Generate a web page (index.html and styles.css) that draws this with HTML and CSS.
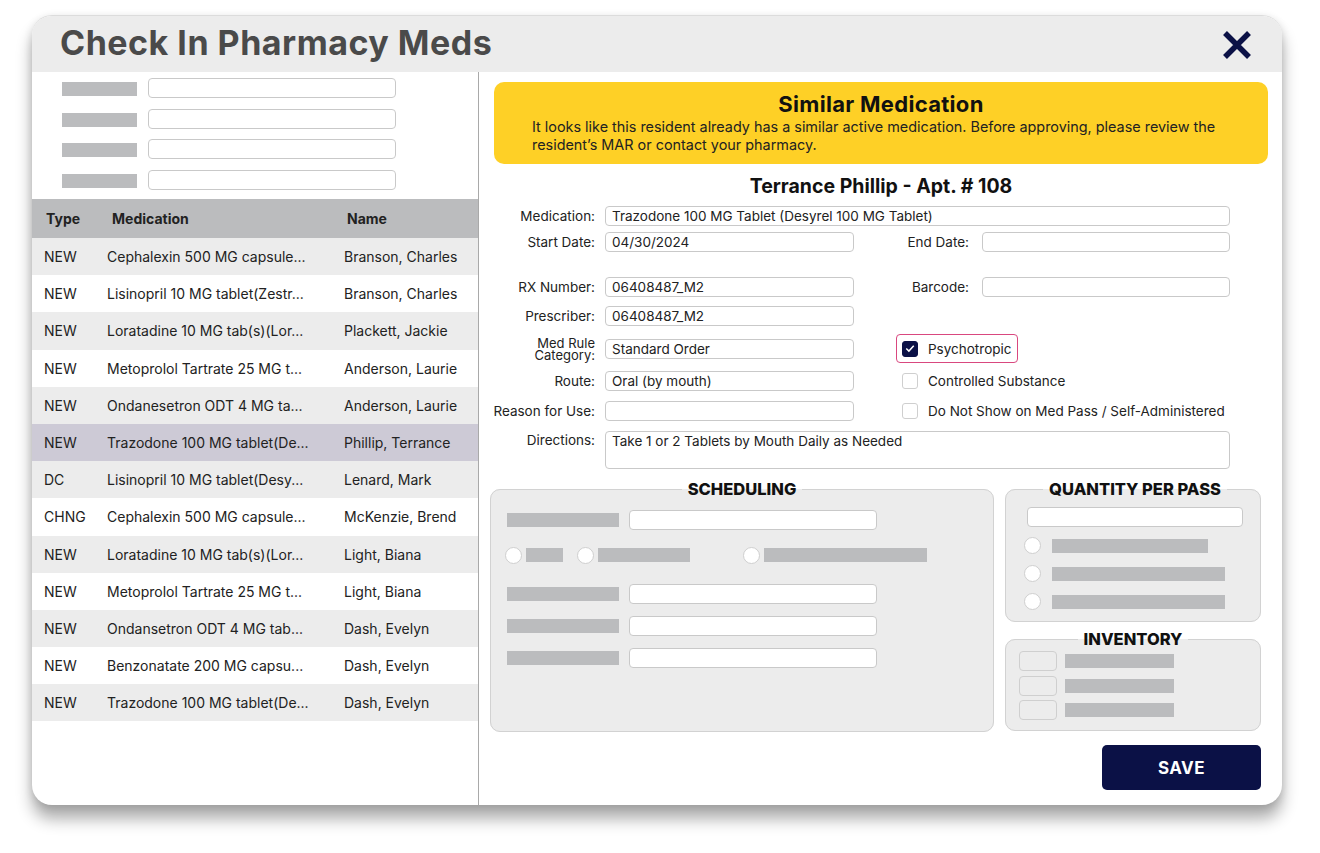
FILE: index.html
```html
<!DOCTYPE html>
<html>
<head>
<meta charset="utf-8">
<link rel="stylesheet" href="styles.css">
</head>
<body>
<div class="modal">
  <div class="header">
    <h1 class="title">Check In Pharmacy Meds</h1>
    <svg class="close" width="30" height="28" viewBox="0 0 30 28"><path d="M3 2 L27 26 M27 2 L3 26" stroke="#0b1146" stroke-width="5.5" stroke-linecap="butt"/></svg>
  </div>
  <div class="content">
    <div class="left">
      <div class="filters">
        <div class="frow"><span class="bar fbar"></span><span class="inp finp"></span></div>
        <div class="frow"><span class="bar fbar"></span><span class="inp finp"></span></div>
        <div class="frow"><span class="bar fbar"></span><span class="inp finp"></span></div>
        <div class="frow"><span class="bar fbar"></span><span class="inp finp"></span></div>
      </div>
      <div class="table">
        <div class="trow thead"><span class="c1">Type</span><span class="c2">Medication</span><span class="c3">Name</span></div>
        <div class="trow alt"><span class="c1">NEW</span><span class="c2">Cephalexin 500 MG capsule...</span><span class="c3">Branson, Charles</span></div>
        <div class="trow"><span class="c1">NEW</span><span class="c2">Lisinopril 10 MG tablet(Zestr...</span><span class="c3">Branson, Charles</span></div>
        <div class="trow alt"><span class="c1">NEW</span><span class="c2">Loratadine 10 MG tab(s)(Lor...</span><span class="c3">Plackett, Jackie</span></div>
        <div class="trow"><span class="c1">NEW</span><span class="c2">Metoprolol Tartrate 25 MG t...</span><span class="c3">Anderson, Laurie</span></div>
        <div class="trow alt"><span class="c1">NEW</span><span class="c2">Ondanesetron ODT 4 MG ta...</span><span class="c3">Anderson, Laurie</span></div>
        <div class="trow sel"><span class="c1">NEW</span><span class="c2">Trazodone 100 MG tablet(De...</span><span class="c3">Phillip, Terrance</span></div>
        <div class="trow alt"><span class="c1">DC</span><span class="c2">Lisinopril 10 MG tablet(Desy...</span><span class="c3">Lenard, Mark</span></div>
        <div class="trow"><span class="c1">CHNG</span><span class="c2">Cephalexin 500 MG capsule...</span><span class="c3">McKenzie, Brend</span></div>
        <div class="trow alt"><span class="c1">NEW</span><span class="c2">Loratadine 10 MG tab(s)(Lor...</span><span class="c3">Light, Biana</span></div>
        <div class="trow"><span class="c1">NEW</span><span class="c2">Metoprolol Tartrate 25 MG t...</span><span class="c3">Light, Biana</span></div>
        <div class="trow alt"><span class="c1">NEW</span><span class="c2">Ondansetron ODT 4 MG tab...</span><span class="c3">Dash, Evelyn</span></div>
        <div class="trow"><span class="c1">NEW</span><span class="c2">Benzonatate 200 MG capsu...</span><span class="c3">Dash, Evelyn</span></div>
        <div class="trow alt"><span class="c1">NEW</span><span class="c2">Trazodone 100 MG tablet(De...</span><span class="c3">Dash, Evelyn</span></div>
      </div>
    </div>
    <div class="right">
      <div class="banner">
        <div class="banner-title">Similar Medication</div>
        <p class="banner-text">It looks like this resident already has a similar active medication. Before approving, please review the resident’s MAR or contact your pharmacy.</p>
      </div>
      <h2 class="resident">Terrance Phillip - Apt. # 108</h2>
      <div class="form">
        <div class="r r-med">
          <label class="lbl">Medication:</label>
          <div class="field span3">Trazodone 100 MG Tablet (Desyrel 100 MG Tablet)</div>
        </div>
        <div class="r r-start">
          <label class="lbl">Start Date:</label>
          <div class="field">04/30/2024</div>
          <label class="lbl lbl2">End Date:</label>
          <div class="field"></div>
        </div>
        <div class="r r-rx">
          <label class="lbl">RX Number:</label>
          <div class="field">06408487_M2</div>
          <label class="lbl lbl2">Barcode:</label>
          <div class="field"></div>
        </div>
        <div class="r r-pres">
          <label class="lbl">Prescriber:</label>
          <div class="field">06408487_M2</div>
        </div>
        <div class="r r-rule">
          <label class="lbl two"><span class="ln">Med Rule</span><span class="ln">Category:</span></label>
          <div class="field">Standard Order</div>
          <div class="checkcell">
            <div class="check-hl"><span class="cb checked"><svg width="15" height="15" viewBox="0 0 15 15"><path d="M3.5 7.5 L6.3 10.3 L11.5 4.5" fill="none" stroke="#fff" stroke-width="1.6"/></svg></span><span>Psychotropic</span></div>
          </div>
        </div>
        <div class="r r-route">
          <label class="lbl">Route:</label>
          <div class="field">Oral (by mouth)</div>
          <div class="checkcell"><div class="check"><span class="cb"></span><span>Controlled Substance</span></div></div>
        </div>
        <div class="r r-reason">
          <label class="lbl">Reason for Use:</label>
          <div class="field"></div>
          <div class="checkcell"><div class="check"><span class="cb"></span><span>Do Not Show on Med Pass / Self-Administered</span></div></div>
        </div>
        <div class="r r-dir">
          <label class="lbl">Directions:</label>
          <div class="field area span3">Take 1 or 2 Tablets by Mouth Daily as Needed</div>
        </div>
      </div>
      <div class="sections">
        <fieldset class="box sched">
          <legend>SCHEDULING</legend>
          <div class="srow first"><span class="bar sbar"></span><span class="inp sinp"></span></div>
          <div class="radios">
            <span class="radio"></span><span class="bar" style="width:37px"></span>
            <span class="radio r2"></span><span class="bar" style="width:92px"></span>
            <span class="radio r3"></span><span class="bar" style="width:163px"></span>
          </div>
          <div class="srow"><span class="bar sbar"></span><span class="inp sinp"></span></div>
          <div class="srow"><span class="bar sbar"></span><span class="inp sinp"></span></div>
          <div class="srow"><span class="bar sbar"></span><span class="inp sinp"></span></div>
        </fieldset>
        <div class="side">
          <fieldset class="box qty">
            <legend>QUANTITY PER PASS</legend>
            <span class="inp qinp"></span>
            <div class="qrow"><span class="radio"></span><span class="bar" style="width:156px"></span></div>
            <div class="qrow"><span class="radio"></span><span class="bar" style="width:173px"></span></div>
            <div class="qrow"><span class="radio"></span><span class="bar" style="width:173px"></span></div>
          </fieldset>
          <fieldset class="box inv">
            <legend>INVENTORY</legend>
            <div class="irow"><span class="ibox"></span><span class="bar" style="width:109px"></span></div>
            <div class="irow"><span class="ibox"></span><span class="bar" style="width:109px"></span></div>
            <div class="irow"><span class="ibox"></span><span class="bar" style="width:109px"></span></div>
          </fieldset>
        </div>
      </div>
      <div class="actions"><button class="save">SAVE</button></div>
    </div>
  </div>
</div>
</body>
</html>
```
FILE: styles.css
```css
* { box-sizing: border-box; }
html, body { margin: 0; padding: 0; background: #fff; }
body {
  font-family: Inter, "DejaVu Sans", sans-serif;
  color: #222;
  width: 1320px;
  height: 853px;
  overflow: hidden;
}
.modal {
  margin: 15px 0 0 32px;
  width: 1250px;
  height: 790px;
  background: #fff;
  border-radius: 20px;
  overflow: hidden;
  display: flex;
  flex-direction: column;
  box-shadow: 0 14px 16px rgba(0,0,0,0.32), 0 2px 8px rgba(0,0,0,0.12);
  border-top: 1px solid #dcdcdc;
}
.header {
  height: 56px;
  flex: none;
  background: #ececec;
  display: flex;
  align-items: center;
  justify-content: space-between;
  padding: 0 30px 0 28px;
}
.title {
  margin: -3px 0 0;
  font-size: 34px;
  font-weight: 700;
  color: #4a4a4a;
  letter-spacing: 0.5px;
}
.close { display: block; margin-top: 1px; }
.content { flex: 1; display: flex; min-height: 0; }
.left {
  width: 447px;
  flex: none;
  border-right: 1.5px solid #a9a9a9;
}
.filters { padding: 6px 0 0 30px; }
.frow { height: 30.5px; display: flex; align-items: flex-start; }
.frow .fbar { margin-top: 4px; }
.bar { display: inline-block; height: 14px; background: #bbbcbe; flex: none; }
.fbar { width: 75px; }
.inp {
  display: inline-block;
  height: 20px;
  background: #fff;
  border: 1px solid #c9c9c9;
  border-radius: 4px;
  flex: none;
}
.finp { width: 248px; margin-left: 11px; }
.table { margin-top: -1px; }
.trow {
  display: flex;
  align-items: center;
  height: 37.2px;
  font-size: 14px;
  color: #222;
  white-space: nowrap;
}
.trow.alt { background: #ececec; }
.trow.sel { background: #cdcad6; }
.thead { height: 39px; background: #bbbcbe; font-weight: 700; }
.c1 { width: 75px; padding-left: 12px; }
.c2 { width: 237px; }
.c3 { flex: 1; }
.thead .c1 { padding-left: 14px; }
.thead .c2 { padding-left: 5px; }
.thead .c3 { padding-left: 3px; }

.right {
  flex: 1;
  padding: 10px 14px 0 15px;
  display: flex;
  flex-direction: column;
}
.banner {
  background: #fed026;
  border-radius: 10px;
  height: 82px;
  padding: 8px 20px 0 38px;
}
.banner-title {
  text-align: center;
  font-size: 22px;
  font-weight: 700;
  color: #111;
  margin-left: -18px;
  letter-spacing: 0.3px;
  line-height: 28px;
}
.banner-text {
  margin: 0;
  font-size: 14.4px;
  line-height: 18px;
  color: #222;
}
.resident {
  margin: 10px 0 0;
  text-align: center;
  font-size: 19.5px;
  font-weight: 700;
  color: #111;
  line-height: 24px;
}
.form {
  margin-left: -5px;
  margin-top: 8px;
  width: 741px;
}
.r {
  display: grid;
  grid-template-columns: 116px 249px 128px 248px;
  align-items: center;
  height: 20px;
}
.r-start { margin-top: 6px; }
.r-rx { margin-top: 25px; }
.r-pres { margin-top: 9px; }
.r-rule { margin-top: 13px; }
.r-route { margin-top: 12px; }
.r-reason { margin-top: 10px; }
.r-dir { margin-top: 10px; height: 38px; align-items: start; }
.lbl {
  text-align: right;
  padding-right: 10px;
  font-size: 13.5px;
  color: #222;
  white-space: nowrap;
}
.lbl.two { font-size: 13px; line-height: 12px; margin: -2px 0; }
.lbl.two .ln { display: block; height: 12px; }
.lbl2 { padding-right: 13px; }
.r-dir .lbl { padding-top: 1px; }
.field {
  height: 20px;
  border: 1px solid #c9c9c9;
  border-radius: 4px;
  background: #fff;
  font-size: 13.5px;
  padding: 0 6px;
  line-height: 18px;
  white-space: nowrap;
  overflow: hidden;
}
.field.span3 { grid-column: 2 / 5; }
.field.area { height: 38px; padding-top: 0; }
.checkcell { grid-column: 3 / 5; padding-left: 42px; font-size: 13.5px; }
.check-hl {
  display: inline-flex;
  align-items: center;
  gap: 10px;
  height: 29px;
  margin: -5px 0;
  padding: 0 6px 0 5px;
  border: 1.5px solid #d9487f;
  border-radius: 4px;
}
.check { display: flex; align-items: center; gap: 10px; padding-left: 6px; }
.cb {
  width: 16px;
  height: 16px;
  border: 1px solid #cfcfcf;
  border-radius: 3px;
  background: #fff;
  flex: none;
  display: inline-flex;
  align-items: center;
  justify-content: center;
}
.cb.checked { background: #0b1146; border-color: #0b1146; }
.cb svg { display: block; }

.sections {
  margin-left: -4px;
  margin-top: 12px;
  width: 771px;
  display: flex;
  gap: 11px;
  align-items: flex-start;
}
.box {
  margin: 0;
  background: #ececec;
  border: 1.5px solid #d2d2d2;
  border-radius: 10px;
  min-width: 0;
}
.box legend {
  margin: 0 auto;
  padding: 0 6px;
  font-size: 16.5px;
  font-weight: 800;
  color: #111;
  line-height: 17px;
}
.sched {
  width: 504px;
  height: 251px;
  padding: 12px 16px 0 16px;
}
.srow { display: flex; align-items: center; height: 20px; margin-top: 12px; }
.srow.first { margin-top: 0; }
.sbar { width: 112px; }
.sinp { width: 248px; margin-left: 10px; }
.radios { display: flex; align-items: center; height: 18px; margin: 16px 0 20px -2px; }
.radio {
  width: 17px; height: 17px; border-radius: 50%;
  background: #fff; border: 1px solid #cfcfcf; flex: none;
  margin-right: 4px;
}
.r2 { margin-left: 14px; }
.r3 { margin-left: 53px; }
.side { width: 256px; display: flex; flex-direction: column; gap: 9px; }
.qty { height: 141px; padding: 9px 17px 0 21px; }
.qinp { width: 216px; display: block; }
.qrow { display: flex; align-items: center; height: 17px; margin-top: 11px; margin-left: -3px; }
.qrow:first-of-type { margin-top: 10px; }
.qrow .radio { margin-right: 11px; }
.inv { height: 100px; padding: 3px 13px 0 13px; }
.irow { display: flex; align-items: center; height: 20px; margin-bottom: 4.5px; }
.ibox { width: 38px; height: 20px; border: 1px solid #cfcfcf; border-radius: 4px; margin-right: 8px; }
.actions { width: 771px; margin-left: -4px; display: flex; justify-content: flex-end; margin-top: 13px; }
.save {
  width: 159px; height: 45px;
  background: #0b1146; color: #fff;
  border: none; border-radius: 5px;
  font-family: inherit; font-size: 17px; font-weight: 700;
  letter-spacing: 0.4px;
}
```
